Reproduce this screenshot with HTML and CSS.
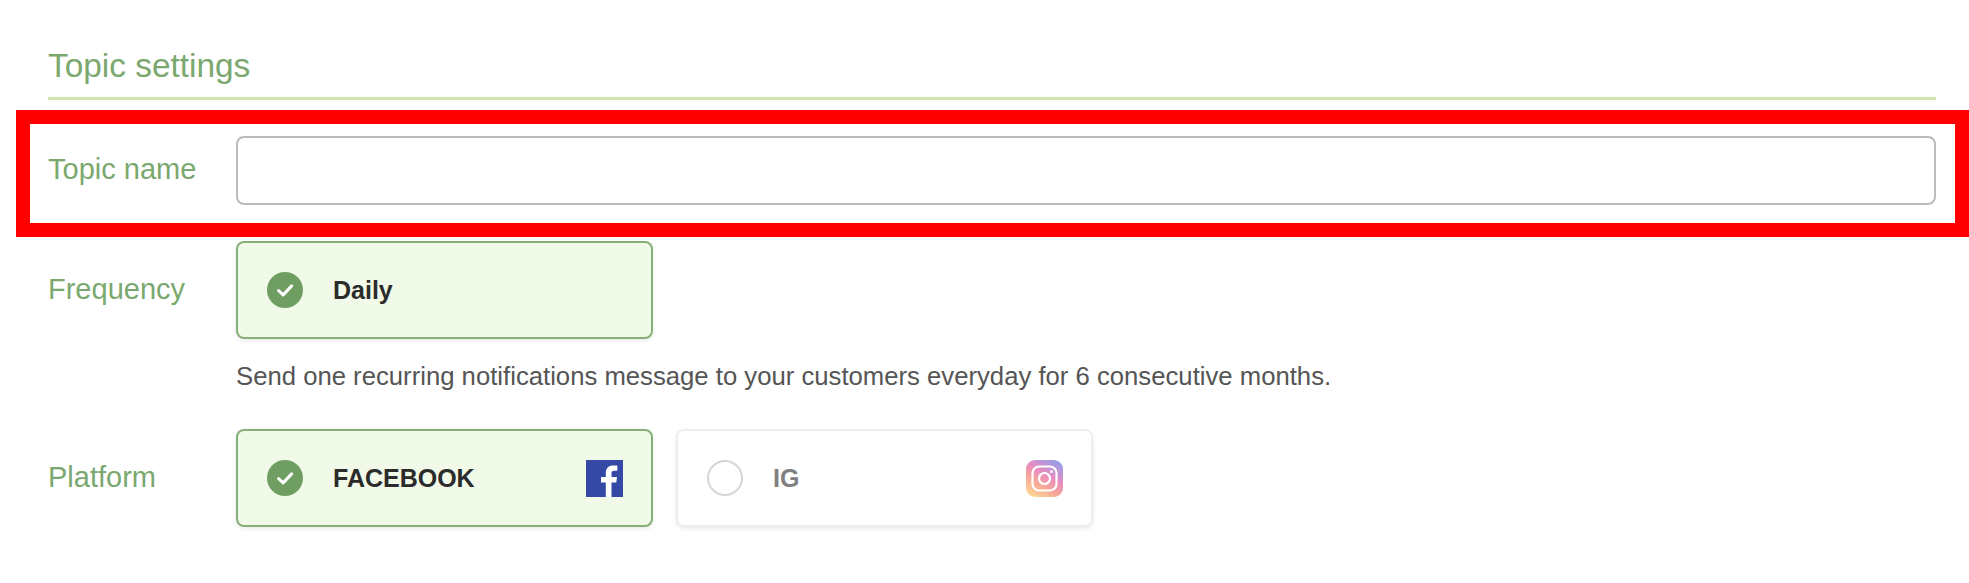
FILE: index.html
```html
<!DOCTYPE html>
<html lang="en">
<head>
    <meta charset="UTF-8">
    <meta name="viewport" content="width=device-width, initial-scale=1.0">
    <title>Topic settings</title>
    <link rel="stylesheet" href="styles.css">
</head>
<body>
    <div class="container">
        <h2 class="section-title">Topic settings</h2>

        <!-- Topic name -->
        <div class="form-row topic-row">
            <label class="form-label input-label" for="topicName">Topic name</label>
            <input type="text" id="topicName" class="text-input">
        </div>

        <!-- Frequency -->
        <div class="form-row frequency-row">
            <div class="form-label">Frequency</div>
            <div>
                <div class="option-card selected">
                    <svg class="option-mark" viewBox="0 0 36 36">
                        <circle cx="18" cy="18" r="18" fill="#6f9e63"/>
                        <path d="M11.5 18.5l4.6 4.4 8.6-9" fill="none" stroke="#fff" stroke-width="3" stroke-linecap="round" stroke-linejoin="round"/>
                    </svg>
                    <span class="option-name">Daily</span>
                </div>
                <p class="help-text">Send one recurring notifications message to your customers everyday for 6 consecutive months.</p>
            </div>
        </div>

        <!-- Platform -->
        <div class="form-row platform-row">
            <div class="form-label">Platform</div>
            <div class="option-list">
                <div class="option-card selected">
                    <svg class="option-mark" viewBox="0 0 36 36">
                        <circle cx="18" cy="18" r="18" fill="#6f9e63"/>
                        <path d="M11.5 18.5l4.6 4.4 8.6-9" fill="none" stroke="#fff" stroke-width="3" stroke-linecap="round" stroke-linejoin="round"/>
                    </svg>
                    <span class="option-name">FACEBOOK</span>
                    <svg class="brand-icon" viewBox="0 0 37 37">
                        <rect width="37" height="37" fill="#3349a5"/>
                        <path d="M25.5 37V22.6h4.8l.7-5.6h-5.5v-3.6c0-1.6.5-2.7 2.8-2.7h3V5.6c-.5-.1-2.3-.2-4.3-.2-4.300 0-7.200 2.600-7.200 7.400V17h-4.800v5.600h4.800V37z" fill="#fff"/>
                    </svg>
                </div>
                <div class="option-card">
                    <span class="option-radio"></span>
                    <span class="option-name">IG</span>
                    <svg class="brand-icon" viewBox="0 0 37 37">
                        <defs>
                            <linearGradient id="igBase" x1="0.15" y1="1" x2="0.75" y2="0">
                                <stop offset="0" stop-color="#fedb94"/>
                                <stop offset="0.35" stop-color="#f7a896"/>
                                <stop offset="0.62" stop-color="#ea8cc0"/>
                                <stop offset="1" stop-color="#9a9ce8"/>
                            </linearGradient>
                        </defs>
                        <rect width="37" height="37" rx="9" fill="url(#igBase)"/>
                        <rect x="6.500" y="6.500" width="24" height="24" rx="6.500" fill="none" stroke="#fff" stroke-width="2.200"/>
                        <circle cx="18.500" cy="18.500" r="5.500" fill="none" stroke="#fff" stroke-width="2.200"/>
                        <circle cx="25.500" cy="11.500" r="1.500" fill="#fff"/>
                    </svg>
                </div>
            </div>
        </div>
    </div>

    <!-- Red highlight frame -->
    <div class="highlight-frame"></div>
</body>
</html>
```

FILE: styles.css
```css
/* Main styles */
body {
    font-family: "Liberation Sans", Arial, sans-serif;
    background: #fff;
    color: #333;
    margin: 0;
    padding: 0;
}

.container {
    height: 583px;
    box-sizing: border-box;
    padding: 46px 33px 0 48px;
}

.section-title {
    margin: 0;
    height: 51px;
    line-height: 40px;
    font-size: 33.4px;
    font-weight: normal;
    color: #7aa86e;
    border-bottom: 3px solid #d2e6b0;
}

.form-row {
    display: grid;
    grid-template-columns: 188px 1fr;
}

.topic-row {
    margin-top: 36px;
}

.frequency-row {
    margin-top: 36px;
}

.platform-row {
    margin-top: 39px;
}

.form-label {
    display: flex;
    align-items: center;
    height: 96px;
    font-size: 29px;
    color: #7aa86e;
}

.input-label {
    height: 67px;
}

.text-input {
    display: block;
    width: 100%;
    height: 69px;
    box-sizing: border-box;
    border: 2px solid #bbb;
    border-radius: 8px;
    background: #fff;
}

.option-list {
    display: flex;
    gap: 23px;
}

.option-card {
    display: flex;
    align-items: center;
    width: 417px;
    height: 98px;
    box-sizing: border-box;
    padding: 0 28px 0 29px;
    background: #fff;
    border: 2px solid #eee;
    border-radius: 8px;
    box-shadow: 0 2px 4px rgba(0, 0, 0, 0.08);
}

.option-card.selected {
    background: #f1f9e8;
    border-color: #86b07a;
}

.option-mark,
.option-radio {
    flex: none;
    width: 36px;
    height: 36px;
    box-sizing: border-box;
}

.option-radio {
    border: 2px solid #d6d6d6;
    border-radius: 50%;
}

.option-name {
    flex: 1;
    margin-left: 30px;
    font-size: 25px;
    font-weight: bold;
    color: #2b2b2b;
}

.option-card:not(.selected) .option-name {
    color: #808080;
}

.brand-icon {
    flex: none;
    width: 37px;
    height: 37px;
}

.help-text {
    margin: 23px 0 0;
    line-height: 28px;
    font-size: 25.7px;
    color: #555;
}

.highlight-frame {
    position: absolute;
    left: 16px;
    top: 110px;
    right: 0;
    height: 99px;
    border: 14px solid #f00;
}
```
